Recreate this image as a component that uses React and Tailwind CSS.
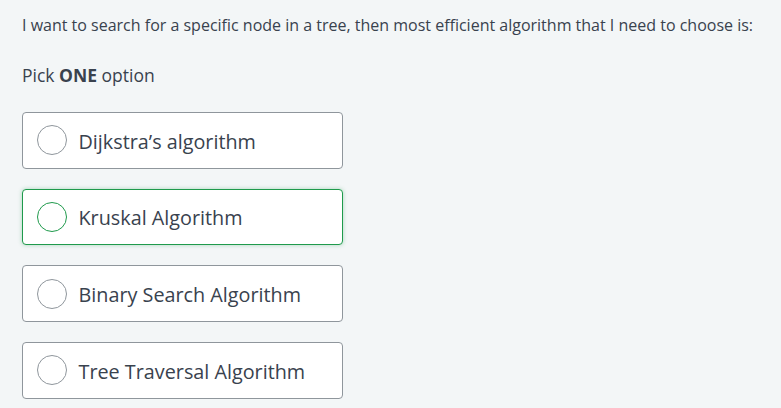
const options = [
  "Dijkstra’s algorithm",
  "Kruskal Algorithm",
  "Binary Search Algorithm",
  "Tree Traversal Algorithm",
];

export default function App() {
  return (
    <div
      className="min-h-screen bg-[#f3f6f7] text-[#39424e] px-[22px] pt-[14px]"
      style={{ fontFamily: '"Open Sans", sans-serif' }}
    >
      <p className="text-[16px] leading-[22px]">
        I want to search for a specific node in a tree, then most efficient algorithm that I need to choose is:
      </p>
      <p className="mt-[27px] text-[17.5px] leading-[24px]">
        Pick <strong className="font-bold">ONE</strong> option
      </p>
      <div className="mt-[25px] flex flex-col gap-[19.8px]">
        {options.map((label, i) => {
          const active = i === 1;
          return (
            <label
              key={label}
              className={
                active
                  ? "w-[321px] h-[56.8px] flex items-center bg-white rounded-[4px] border border-[#1f9a4c] shadow-[0_0_4px_rgba(31,154,76,0.35)] pl-[13.5px] cursor-pointer"
                  : "w-[321px] h-[56.8px] flex items-center bg-white rounded-[4px] border border-[#8f969c] pl-[13.5px] cursor-pointer"
              }
            >
              <span
                className={
                  active
                    ? "w-[30px] h-[30px] rounded-full border border-[#1f9a4c] bg-white shrink-0"
                    : "w-[30px] h-[30px] rounded-full border border-[#8f969c] bg-white shrink-0"
                }
              />
              <span className="ml-[12px] pt-[3px] text-[19.8px] leading-[28px]">{label}</span>
            </label>
          );
        })}
      </div>
    </div>
  );
}
